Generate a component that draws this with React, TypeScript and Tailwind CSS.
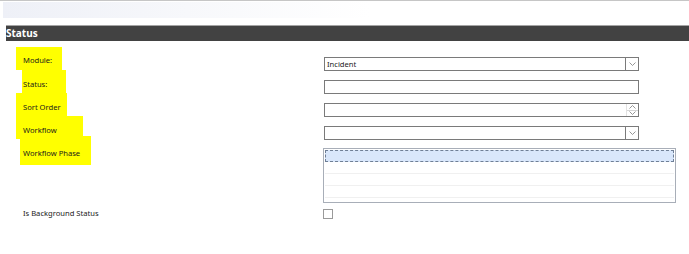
const FONT = "font-['Noto_Sans','Open_Sans',sans-serif]";

function Chevron({ up = false }: { up?: boolean }) {
  return (
    <svg width="7" height="4" viewBox="0 0 7 4" className={up ? "rotate-180" : ""}>
      <path d="M0.5 0.5 L3.5 3.5 L6.5 0.5" fill="none" stroke="#8a8a8a" strokeWidth="0.9" />
    </svg>
  );
}

function SelectBox({ value = "" }: { value?: string }) {
  return (
    <div className="flex h-[14px] w-[315px] border border-[#7a7a7a] bg-white">
      <div className="flex-1 pl-[2px] text-[7.6px] leading-[12px] text-[#1a1a1a]">{value}</div>
      <div className="flex w-[13px] items-center justify-center border-l border-[#7a7a7a]">
        <Chevron />
      </div>
    </div>
  );
}

export default function App() {
  return (
    <div className={`h-[254px] w-[689px] overflow-hidden bg-white ${FONT}`}>
      <div className="h-px bg-[#c6c6c6]" />
      <div className="ml-[3px] mt-px h-[16px] w-[367px] bg-gradient-to-r from-[#eef0f7] via-[#f7f8fb] to-white" />
      <div className="mt-[7px] ml-[6px] flex h-[16px] items-center border-t border-[#a4a4a4] bg-[#424242] text-[10px] font-bold text-white">
        Status
      </div>

      <div className="grid grid-cols-[323px_1fr] pt-[6px] text-[7.6px] text-[#1a1a1a]">
        <div className="leading-[23px]">
          <div className="ml-[16px] h-[23px] w-[46px] bg-[#ffff00] pl-[7px] pt-[2px]">Module:</div>
          <div className="ml-[22px] h-[23px] w-[44px] bg-[#ffff00] pl-px pt-[3px]">Status:</div>
          <div className="ml-[16px] h-[23px] w-[51px] bg-[#ffff00] pl-[7px] pt-[3px]">Sort Order</div>
          <div className="ml-[16px] h-[23px] w-[67px] bg-[#ffff00] pl-[7px] pt-[3px]">Workflow</div>
          <div className="ml-[20px] -mt-[3px] h-[29px] w-[71px] bg-[#ffff00] pl-[3px] pt-[6px]">Workflow Phase</div>
        </div>

        <div className="flex flex-col pl-px pt-[10px]">
          <SelectBox value="Incident" />
          <div className="mt-[9px] h-[14px] w-[315px] border border-[#7a7a7a] bg-white" />
          <div className="mt-[9px] flex h-[14px] w-[315px] border border-[#7a7a7a] bg-white">
            <div className="flex-1" />
            <div className="flex w-[12px] flex-col border-l border-[#e2e2e2]">
              <div className="flex flex-1 items-center justify-center border-b border-[#d6d6d6]">
                <Chevron up />
              </div>
              <div className="flex flex-1 items-center justify-center">
                <Chevron />
              </div>
            </div>
          </div>
          <div className="mt-[9px]">
            <SelectBox />
          </div>
          <div className="-ml-px mt-[8px] flex h-[55px] w-[353px] flex-col border border-[#a8aeb8] bg-white p-px">
            <div className="h-[12px] border border-dashed border-[#6f7f96] bg-[#d9e7fb]" />
            <div className="h-[12px] border-b border-[#f0f0f0]" />
            <div className="h-[12px] border-b border-[#f0f0f0]" />
            <div className="h-[12px] border-b border-[#f0f0f0]" />
          </div>
        </div>
      </div>

      <div className="mt-[5px] grid grid-cols-[323px_1fr] items-center text-[7.6px] text-[#1a1a1a]">
        <div className="pl-[23px]">Is Background Status</div>
        <div className="h-[10px] w-[10px] border border-[#9a9a9a] bg-white" />
      </div>
    </div>
  );
}
